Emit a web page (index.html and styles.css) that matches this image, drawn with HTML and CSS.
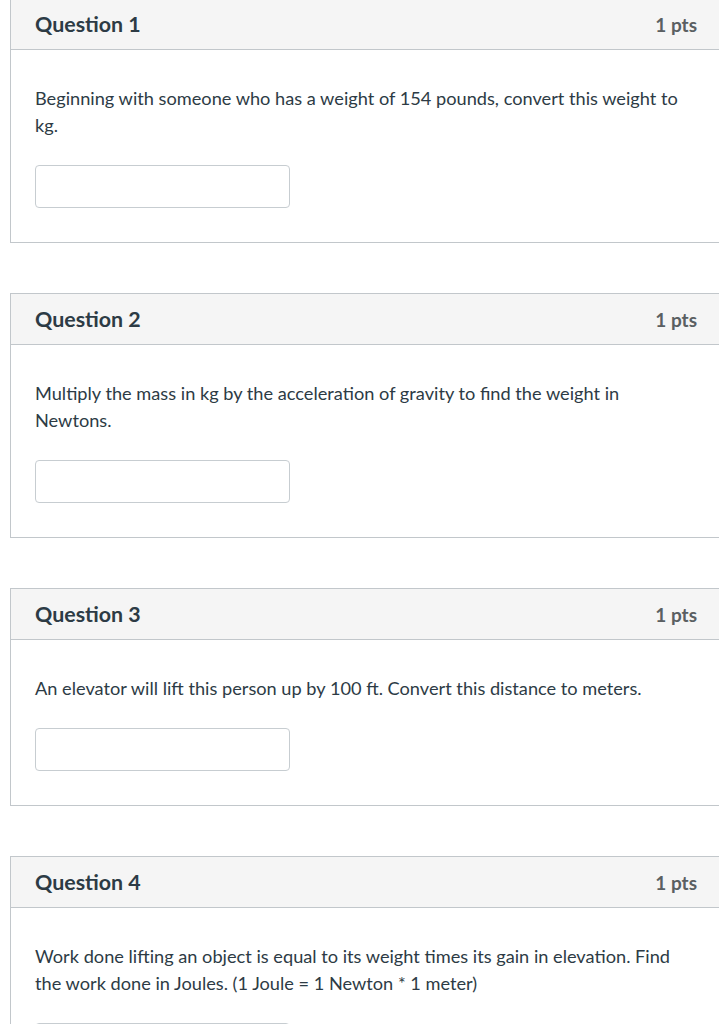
FILE: index.html
```html
<!DOCTYPE html>
<html>
<head>
<meta charset="utf-8">
<link rel="stylesheet" href="styles.css">
</head>
<body>
<div class="quiz">
  <div class="question first">
    <div class="q-header">
      <span class="q-title">Question 1</span>
      <span class="q-pts">1 pts</span>
    </div>
    <div class="q-body">
      <p class="q-text">Beginning with someone who has a weight of 154 pounds, convert this weight to kg.</p>
      <input class="q-input" type="text">
    </div>
  </div>
  <div class="question">
    <div class="q-header">
      <span class="q-title">Question 2</span>
      <span class="q-pts">1 pts</span>
    </div>
    <div class="q-body">
      <p class="q-text">Multiply the mass in kg by the acceleration of gravity to find the weight in Newtons.</p>
      <input class="q-input" type="text">
    </div>
  </div>
  <div class="question">
    <div class="q-header">
      <span class="q-title">Question 3</span>
      <span class="q-pts">1 pts</span>
    </div>
    <div class="q-body">
      <p class="q-text">An elevator will lift this person up by 100 ft. Convert this distance to meters.</p>
      <input class="q-input" type="text">
    </div>
  </div>
  <div class="question">
    <div class="q-header">
      <span class="q-title">Question 4</span>
      <span class="q-pts">1 pts</span>
    </div>
    <div class="q-body">
      <p class="q-text">Work done lifting an object is equal to its weight times its gain in elevation. Find the work done in Joules. (1 Joule = 1 Newton * 1 meter)</p>
      <input class="q-input" type="text">
    </div>
  </div>
</div>
</body>
</html>
```
FILE: styles.css
```css
html, body {
  margin: 0;
  padding: 0;
  background: #ffffff;
  overflow: hidden;
}
body {
  font-family: Lato, "Open Sans", sans-serif;
  color: #2d3b45;
}
.quiz {
  display: flex;
  flex-direction: column;
  gap: 50px;
  padding-left: 10px;
  width: 710px;
}
.question {
  border: 1px solid #c2c7cb;
  background: #fff;
}
.question.first {
  margin-top: -2px;
}
.q-header {
  display: flex;
  justify-content: space-between;
  align-items: center;
  height: 50px;
  padding: 0 22px 0 24px;
  background: #f5f5f5;
  border-bottom: 1px solid #c2c7cb;
}
.q-title {
  font-size: 21.4px;
  font-weight: 700;
  color: #2d3b45;
}
.q-pts {
  font-size: 19px;
  font-weight: 700;
  color: #5a5f62;
}
.q-body {
  padding: 35px 22px 34px 24px;
}
.q-text {
  margin: 0 0 26px 0;
  font-size: 18.2px;
  line-height: 27px;
  max-width: 655px;
}
.q-input {
  display: block;
  box-sizing: border-box;
  width: 255px;
  height: 43px;
  border: 1px solid #c7cdd1;
  border-radius: 4px;
  background: #fff;
  margin: 0;
  padding: 0 10px;
  font-family: inherit;
  font-size: 16px;
}
```
